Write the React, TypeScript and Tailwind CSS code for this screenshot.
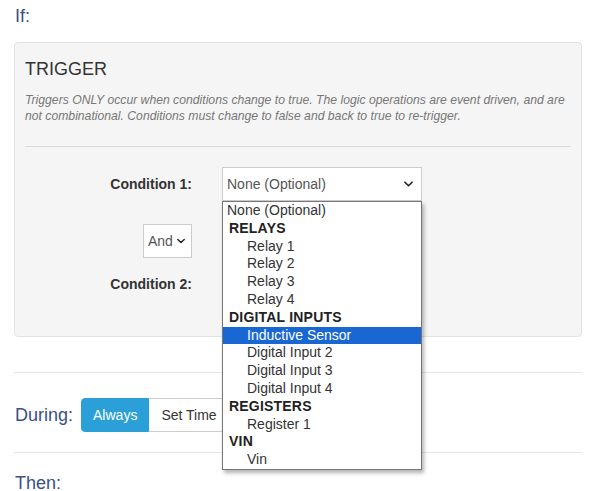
import React from "react";

const font = { fontFamily: '"Liberation Sans", Arial, sans-serif' };

function Chevron({ className }: { className?: string }) {
  return (
    <svg viewBox="0 0 10 6" className={className} fill="none">
      <path d="M1 1l4 4 4-4" stroke="#222" strokeWidth="1.8" strokeLinecap="round" strokeLinejoin="round" />
    </svg>
  );
}

type Opt = { label: string; group?: boolean; indent?: boolean; active?: boolean };

const options: Opt[] = [
  { label: "None (Optional)" },
  { label: "RELAYS", group: true },
  { label: "Relay 1", indent: true },
  { label: "Relay 2", indent: true },
  { label: "Relay 3", indent: true },
  { label: "Relay 4", indent: true },
  { label: "DIGITAL INPUTS", group: true },
  { label: "Inductive Sensor", indent: true, active: true },
  { label: "Digital Input 2", indent: true },
  { label: "Digital Input 3", indent: true },
  { label: "Digital Input 4", indent: true },
  { label: "REGISTERS", group: true },
  { label: "Register 1", indent: true },
  { label: "VIN", group: true },
  { label: "Vin", indent: true },
];

function DropdownList() {
  return (
    <div className="absolute left-[222px] top-[201px] w-[200px] bg-white border border-[#767676] shadow-[2px_3px_4px_rgba(0,0,0,0.3)] text-[14px] leading-[17.8px]">
      {options.map((o) => (
        <div
          key={o.label}
          className={
            o.active
              ? "bg-[#1967d2] text-white pl-[24px]"
              : o.group
              ? "font-bold text-[#222] pl-[6px] tracking-[0.2px]"
              : o.indent
              ? "text-[#333] pl-[24px]"
              : "text-[#333] pl-[4px]"
          }
        >
          {o.label}
        </div>
      ))}
    </div>
  );
}

export default function App() {
  return (
    <div style={font} className="relative w-[589px] h-[491px] overflow-hidden bg-white pl-[14px] pr-[7px]">
      <div className="h-[42px] pt-[3px] text-[18px] leading-[26px] text-[#3b4f82] pl-[1px]">If:</div>

      <div className="h-[295px] border border-[#e3e3e3] bg-[#f5f5f5] rounded-[4px] px-[10px] pt-[15px]">
        <div className="text-[18px] leading-[22px] text-[#333]">TRIGGER</div>
        <p className="mt-[12px] text-[12.2px] leading-[16px] italic text-[#777] whitespace-nowrap">
          Triggers ONLY occur when conditions change to true. The logic operations are event driven, and are
          <br />
          not combinational. Conditions must change to false and back to true to re-trigger.
        </p>
        <div className="mt-[22px] border-t border-[#dcdcdc]" />

        <div className="mt-[20px] flex items-center gap-[30px]">
          <div className="w-[167px] text-right font-bold text-[14px] text-[#333]">Condition 1:</div>
          <div className="w-[200px] h-[34px] bg-white border border-[#ccc] flex items-center justify-between pl-[4px] pr-[8px] text-[14px] text-[#555]">
            <span>None (Optional)</span>
            <Chevron className="w-[9px] h-[6px]" />
          </div>
        </div>

        <div className="mt-[23px] flex">
          <div className="w-[167px] flex justify-end">
            <div className="w-[49px] h-[34px] bg-white border border-[#ccc] flex items-center pl-[4px] gap-[4px] text-[14px] text-[#555]">
              <span>And</span>
              <Chevron className="w-[8px] h-[6px]" />
            </div>
          </div>
        </div>

        <div className="mt-[9px] flex items-center gap-[30px]">
          <div className="w-[167px] text-right font-bold text-[14px] text-[#333]">Condition 2:</div>
          <div className="w-[200px] h-[34px] bg-white border border-[#ccc]" />
        </div>
      </div>

      <div className="mt-[35px] border-t border-[#e6e6e6]" />

      <div className="mt-[25px] flex items-center gap-[8px]">
        <div className="text-[18px] text-[#3b4f82] pl-[1px]">During:</div>
        <div className="flex h-[34px] text-[14px]">
          <div className="px-[11px] flex items-center bg-[#2a9fd8] border border-[#2a9fd8] rounded-l-[4px] text-white">
            Always
          </div>
          <div className="px-[12px] flex items-center bg-white border border-l-0 border-[#ccc] text-[#333] w-[120px]">
            Set Time
          </div>
        </div>
      </div>

      <div className="mt-[20px] border-t border-[#e6e6e6]" />

      <div className="mt-[18px] text-[18px] leading-[24px] text-[#3b4f82] pl-[1px]">Then:</div>

      <DropdownList />
    </div>
  );
}
